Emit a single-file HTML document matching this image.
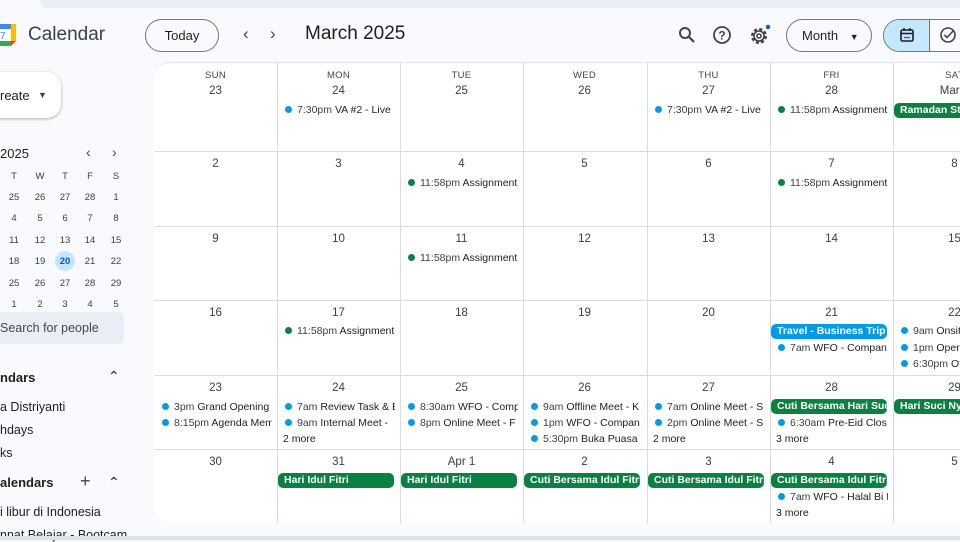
<!DOCTYPE html>
<html><head><meta charset="utf-8"><style>
*{margin:0;padding:0;box-sizing:border-box}
body{width:960px;height:540px;overflow:hidden;background:#f8fafd;font-family:"Liberation Sans",Arial,sans-serif;color:#1f1f1f;position:relative}
.a{position:absolute}
.topbar{left:40px;top:0;width:920px;height:8px;background:#e9eef6;border-radius:0 0 0 8px}
.grid{left:154px;top:62px;width:900px;height:461px;background:#fff;border-radius:16px 0 0 16px;border-top:1px solid #e3e3e3}
.vl{position:absolute;top:62px;width:1px;height:461px;background:#dadce0}
.hl{position:absolute;left:154px;width:806px;height:1px;background:#dadce0}
.c{position:absolute;width:123px;font-size:11px}
.n{position:absolute;left:0;width:123px;text-align:center;font-size:11.5px;color:#3c4043}
.w{position:absolute;left:0;width:123px;text-align:center;font-size:9.5px;color:#444746;letter-spacing:.3px}
.e{position:absolute;left:6px;width:112px;white-space:nowrap;overflow:hidden;font-size:10.5px;color:#1f1f1f;height:14px;line-height:14px}
.e i{display:inline-block;width:7px;height:7px;border-radius:50%;background:#039be5;margin:0 5px 0 2px;vertical-align:0}
.e i.g{background:#0b8043}
.e b{font-weight:normal;color:#3c4043}
.e span{font-weight:normal;color:#1f1f1f}
.ch{position:absolute;left:1px;width:116px;height:15px;line-height:15px;border-radius:5px;background:#0b8043;color:#fff;font-size:10.5px;font-weight:bold;padding-left:6px;white-space:nowrap;overflow:hidden}
.ch.b{background:#039be5}
.m{position:absolute;left:6px;font-size:10.5px;color:#1f1f1f}
.mc{position:absolute;width:20px;text-align:center;font-size:9.5px;color:#3c4043}
.side{font-size:12.5px;color:#1f1f1f;position:absolute}
.pill{border:1px solid #747775;border-radius:18px;position:absolute;font-size:13px;text-align:center}
</style></head><body>
<div class="a topbar"></div>
<svg class="a" style="left:-4px;top:22px" width="24" height="26" viewBox="0 0 24 26"><rect x="0" y="2" width="20" height="22" rx="2" fill="#fff"/><rect x="0" y="2" width="20" height="5" fill="#4285f4"/><rect x="15" y="2" width="5" height="17" fill="#fbbc04"/><rect x="0" y="19" width="15" height="5" fill="#34a853"/><polygon points="15,19 20,19 15,24" fill="#ea4335"/><text x="4" y="17" font-size="10" fill="#4285f4" font-family="Liberation Sans">7</text></svg>
<div class="a" style="left:28px;top:24px;font-size:19px;color:#3c4043">Calendar</div>
<div class="pill" style="left:145px;top:19px;width:74px;height:33px;line-height:31px">Today</div>
<div class="a" style="left:243px;top:24px;font-size:17px;color:#444">&#8249;</div>
<div class="a" style="left:270px;top:24px;font-size:17px;color:#444">&#8250;</div>
<div class="a" style="left:305px;top:23px;font-size:19px;color:#1f1f1f">March 2025</div>
<svg class="a" style="left:678px;top:26px" width="18" height="18" viewBox="0 0 18 18"><circle cx="7" cy="7" r="5" fill="none" stroke="#444" stroke-width="2"/><line x1="10.5" y1="10.5" x2="16" y2="16" stroke="#444" stroke-width="2.2"/></svg>
<svg class="a" style="left:712px;top:25px" width="20" height="20" viewBox="0 0 20 20"><circle cx="10" cy="10" r="8" fill="none" stroke="#444" stroke-width="1.8"/><text x="10" y="14.5" text-anchor="middle" font-size="12" font-weight="bold" fill="#444" font-family="Liberation Sans">?</text></svg>
<svg class="a" style="left:749px;top:24px" width="22" height="22" viewBox="0 0 22 22"><circle cx="10" cy="12" r="6.5" fill="none" stroke="#444" stroke-width="3" stroke-dasharray="3 2.1"/><circle cx="10" cy="12" r="5" fill="none" stroke="#444" stroke-width="1.6"/><circle cx="10" cy="12" r="2" fill="none" stroke="#444" stroke-width="1.6"/><circle cx="19" cy="3" r="2.2" fill="#0b57d0"/></svg>
<div class="pill" style="left:786px;top:19px;width:86px;height:33px;line-height:31px;text-align:left;padding-left:15px">Month <span style="font-size:9px;margin-left:8px">&#9660;</span></div>
<div class="a" style="left:883px;top:19px;width:100px;height:33px;border:1px solid #747775;border-radius:18px;overflow:hidden"><div style="width:46px;height:33px;background:#c2e7ff;border-right:1px solid #747775"></div></div>
<svg class="a" style="left:899px;top:27px" width="16" height="16" viewBox="0 0 16 16"><rect x="2" y="3" width="12" height="11" rx="1.5" fill="none" stroke="#1f1f1f" stroke-width="1.6"/><line x1="2" y1="6.5" x2="14" y2="6.5" stroke="#1f1f1f" stroke-width="1.5"/><line x1="5" y1="1" x2="5" y2="4" stroke="#1f1f1f" stroke-width="1.5"/><line x1="11" y1="1" x2="11" y2="4" stroke="#1f1f1f" stroke-width="1.5"/><circle cx="6" cy="10.5" r=".8" fill="#1f1f1f"/><circle cx="8" cy="10.5" r=".8" fill="#1f1f1f"/><circle cx="10" cy="10.5" r=".8" fill="#1f1f1f"/></svg>
<svg class="a" style="left:939px;top:26px" width="18" height="18" viewBox="0 0 18 18"><circle cx="9" cy="9" r="7" fill="none" stroke="#444" stroke-width="1.6"/><polyline points="5.5,9 8,11.5 15,4" fill="none" stroke="#444" stroke-width="1.6"/></svg>

<div class="a" style="left:-20px;top:72px;width:81px;height:46px;background:#fff;border-radius:14px;box-shadow:0 1px 3px rgba(0,0,0,.3)"></div>
<div class="a" style="left:0;top:88px;font-size:13px;color:#1f1f1f">reate</div>
<div class="a" style="left:38px;top:90px;font-size:9px;color:#444">&#9660;</div>

<div class="a" style="left:0;top:146px;font-size:13px;color:#1f1f1f">2025</div>
<div class="a" style="left:86px;top:144px;font-size:14px;color:#444">&#8249;</div>
<div class="a" style="left:112px;top:144px;font-size:14px;color:#444">&#8250;</div>
<div class="a" style="left:55px;top:251px;width:20px;height:20px;border-radius:50%;background:#c2e7ff"></div>
<div class="mc" style="left:4px;top:171px">T</div><div class="mc" style="left:30px;top:171px">W</div><div class="mc" style="left:55px;top:171px">T</div><div class="mc" style="left:80px;top:171px">F</div><div class="mc" style="left:106px;top:171px">S</div>
<div class="mc" style="left:4px;top:192px">25</div><div class="mc" style="left:30px;top:192px">26</div><div class="mc" style="left:55px;top:192px">27</div><div class="mc" style="left:80px;top:192px">28</div><div class="mc" style="left:106px;top:192px">1</div>
<div class="mc" style="left:4px;top:213px">4</div><div class="mc" style="left:30px;top:213px">5</div><div class="mc" style="left:55px;top:213px">6</div><div class="mc" style="left:80px;top:213px">7</div><div class="mc" style="left:106px;top:213px">8</div>
<div class="mc" style="left:4px;top:235px">11</div><div class="mc" style="left:30px;top:235px">12</div><div class="mc" style="left:55px;top:235px">13</div><div class="mc" style="left:80px;top:235px">14</div><div class="mc" style="left:106px;top:235px">15</div>
<div class="mc" style="left:4px;top:256px">18</div><div class="mc" style="left:30px;top:256px">19</div><div class="mc" style="left:55px;top:256px;color:#0b57d0;font-weight:bold">20</div><div class="mc" style="left:80px;top:256px">21</div><div class="mc" style="left:106px;top:256px">22</div>
<div class="mc" style="left:4px;top:278px">25</div><div class="mc" style="left:30px;top:278px">26</div><div class="mc" style="left:55px;top:278px">27</div><div class="mc" style="left:80px;top:278px">28</div><div class="mc" style="left:106px;top:278px">29</div>
<div class="mc" style="left:4px;top:299px">1</div><div class="mc" style="left:30px;top:299px">2</div><div class="mc" style="left:55px;top:299px">3</div><div class="mc" style="left:80px;top:299px">4</div><div class="mc" style="left:106px;top:299px">5</div>
<div class="a" style="left:-10px;top:312px;width:134px;height:32px;background:#e9eef6;border-radius:5px"></div>
<div class="side" style="left:0;top:321px;color:#444746">Search for people</div>
<div class="side" style="left:0;top:370px;font-weight:bold;font-size:13px">ndars</div>
<div class="side" style="left:108px;top:368px;font-size:14px">&#8963;</div>
<div class="side" style="left:0;top:400px">a Distriyanti</div>
<div class="side" style="left:0;top:423px">hdays</div>
<div class="side" style="left:0;top:446px">ks</div>
<div class="side" style="left:0;top:475px;font-weight:bold;font-size:13px">alendars</div>
<div class="side" style="left:80px;top:471px;font-size:18px;color:#444">+</div>
<div class="side" style="left:108px;top:474px;font-size:14px">&#8963;</div>
<div class="side" style="left:0;top:505px">i libur di Indonesia</div>
<div class="side" style="left:0;top:528px">nnat Belajar - Bootcam</div>

<div class="a grid"></div>
<div class="vl" style="left:277px"></div><div class="vl" style="left:400px"></div><div class="vl" style="left:523px"></div><div class="vl" style="left:647px"></div><div class="vl" style="left:770px"></div><div class="vl" style="left:893px"></div>
<div class="hl" style="top:151px"></div><div class="hl" style="top:226px"></div><div class="hl" style="top:300px"></div><div class="hl" style="top:375px"></div><div class="hl" style="top:449px"></div>
<div class="a" style="left:154px;top:523px;width:806px;height:17px;background:#f8fafd"></div>
<div class="a" style="left:0;top:536px;width:960px;height:4px;background:#dde3ea"></div>

<div class="c" style="left:154px;top:62px"><div class="w" style="top:8px">SUN</div><div class="n" style="top:23px">23</div></div>
<div class="c" style="left:277px;top:62px"><div class="w" style="top:8px">MON</div><div class="n" style="top:23px">24</div><div class="e" style="top:41px"><i></i><b>7:30pm</b> <span>VA #2 - Live</span></div></div>
<div class="c" style="left:400px;top:62px"><div class="w" style="top:8px">TUE</div><div class="n" style="top:23px">25</div></div>
<div class="c" style="left:523px;top:62px"><div class="w" style="top:8px">WED</div><div class="n" style="top:23px">26</div></div>
<div class="c" style="left:647px;top:62px"><div class="w" style="top:8px">THU</div><div class="n" style="top:23px">27</div><div class="e" style="top:41px"><i></i><b>7:30pm</b> <span>VA #2 - Live</span></div></div>
<div class="c" style="left:770px;top:62px"><div class="w" style="top:8px">FRI</div><div class="n" style="top:23px">28</div><div class="e" style="top:41px"><i class="g"></i><b>11:58pm</b> <span>Assignment</span></div></div>
<div class="c" style="left:893px;top:62px"><div class="w" style="top:8px">SAT</div><div class="n" style="top:23px">Mar 1</div><div class="ch" style="top:41px">Ramadan Start</div></div>

<div class="c" style="left:154px;top:151px"><div class="n" style="top:7px">2</div></div>
<div class="c" style="left:277px;top:151px"><div class="n" style="top:7px">3</div></div>
<div class="c" style="left:400px;top:151px"><div class="n" style="top:7px">4</div><div class="e" style="top:25px"><i class="g"></i><b>11:58pm</b> <span>Assignment</span></div></div>
<div class="c" style="left:523px;top:151px"><div class="n" style="top:7px">5</div></div>
<div class="c" style="left:647px;top:151px"><div class="n" style="top:7px">6</div></div>
<div class="c" style="left:770px;top:151px"><div class="n" style="top:7px">7</div><div class="e" style="top:25px"><i class="g"></i><b>11:58pm</b> <span>Assignment</span></div></div>
<div class="c" style="left:893px;top:151px"><div class="n" style="top:7px">8</div></div>

<div class="c" style="left:154px;top:226px"><div class="n" style="top:7px">9</div></div>
<div class="c" style="left:277px;top:226px"><div class="n" style="top:7px">10</div></div>
<div class="c" style="left:400px;top:226px"><div class="n" style="top:7px">11</div><div class="e" style="top:25px"><i class="g"></i><b>11:58pm</b> <span>Assignment</span></div></div>
<div class="c" style="left:523px;top:226px"><div class="n" style="top:7px">12</div></div>
<div class="c" style="left:647px;top:226px"><div class="n" style="top:7px">13</div></div>
<div class="c" style="left:770px;top:226px"><div class="n" style="top:7px">14</div></div>
<div class="c" style="left:893px;top:226px"><div class="n" style="top:7px">15</div></div>

<div class="c" style="left:154px;top:300px"><div class="n" style="top:7px">16</div></div>
<div class="c" style="left:277px;top:300px"><div class="n" style="top:7px">17</div><div class="e" style="top:24px"><i class="g"></i><b>11:58pm</b> <span>Assignment</span></div></div>
<div class="c" style="left:400px;top:300px"><div class="n" style="top:7px">18</div></div>
<div class="c" style="left:523px;top:300px"><div class="n" style="top:7px">19</div></div>
<div class="c" style="left:647px;top:300px"><div class="n" style="top:7px">20</div></div>
<div class="c" style="left:770px;top:300px"><div class="n" style="top:7px">21</div><div class="ch b" style="top:24px">Travel - Business Trip E</div><div class="e" style="top:41px"><i></i><b>7am</b> <span>WFO - Compan</span></div></div>
<div class="c" style="left:893px;top:300px"><div class="n" style="top:7px">22</div><div class="e" style="top:24px"><i></i><b>9am</b> <span>Onsite</span></div><div class="e" style="top:41px"><i></i><b>1pm</b> <span>Operat</span></div><div class="e" style="top:57px"><i></i><b>6:30pm</b> <span>Off</span></div></div>

<div class="c" style="left:154px;top:375px"><div class="n" style="top:7px">23</div><div class="e" style="top:25px"><i></i><b>3pm</b> <span>Grand Opening</span></div><div class="e" style="top:41px"><i></i><b>8:15pm</b> <span>Agenda Mem</span></div></div>
<div class="c" style="left:277px;top:375px"><div class="n" style="top:7px">24</div><div class="e" style="top:25px"><i></i><b>7am</b> <span>Review Task &amp; E</span></div><div class="e" style="top:41px"><i></i><b>9am</b> <span>Internal Meet -</span></div><div class="m" style="top:58px">2 more</div></div>
<div class="c" style="left:400px;top:375px"><div class="n" style="top:7px">25</div><div class="e" style="top:25px"><i></i><b>8:30am</b> <span>WFO - Comp</span></div><div class="e" style="top:41px"><i></i><b>8pm</b> <span>Online Meet - F</span></div></div>
<div class="c" style="left:523px;top:375px"><div class="n" style="top:7px">26</div><div class="e" style="top:25px"><i></i><b>9am</b> <span>Offline Meet - K</span></div><div class="e" style="top:41px"><i></i><b>1pm</b> <span>WFO - Compan</span></div><div class="e" style="top:57px"><i></i><b>5:30pm</b> <span>Buka Puasa</span></div></div>
<div class="c" style="left:647px;top:375px"><div class="n" style="top:7px">27</div><div class="e" style="top:25px"><i></i><b>7am</b> <span>Online Meet - S</span></div><div class="e" style="top:41px"><i></i><b>2pm</b> <span>Online Meet - S</span></div><div class="m" style="top:58px">2 more</div></div>
<div class="c" style="left:770px;top:375px"><div class="n" style="top:7px">28</div><div class="ch" style="top:24px">Cuti Bersama Hari Suci</div><div class="e" style="top:41px"><i></i><b>6:30am</b> <span>Pre-Eid Clos</span></div><div class="m" style="top:58px">3 more</div></div>
<div class="c" style="left:893px;top:375px"><div class="n" style="top:7px">29</div><div class="ch" style="top:24px">Hari Suci Nyepi</div></div>

<div class="c" style="left:154px;top:449px"><div class="n" style="top:7px">30</div></div>
<div class="c" style="left:277px;top:449px"><div class="n" style="top:7px">31</div><div class="ch" style="top:24px">Hari Idul Fitri</div></div>
<div class="c" style="left:400px;top:449px"><div class="n" style="top:7px">Apr 1</div><div class="ch" style="top:24px">Hari Idul Fitri</div></div>
<div class="c" style="left:523px;top:449px"><div class="n" style="top:7px">2</div><div class="ch" style="top:24px">Cuti Bersama Idul Fitri</div></div>
<div class="c" style="left:647px;top:449px"><div class="n" style="top:7px">3</div><div class="ch" style="top:24px">Cuti Bersama Idul Fitri</div></div>
<div class="c" style="left:770px;top:449px"><div class="n" style="top:7px">4</div><div class="ch" style="top:24px">Cuti Bersama Idul Fitri</div><div class="e" style="top:41px"><i></i><b>7am</b> <span>WFO - Halal Bi I</span></div><div class="m" style="top:58px">3 more</div></div>
<div class="c" style="left:893px;top:449px"><div class="n" style="top:7px">5</div></div>
</body></html>
